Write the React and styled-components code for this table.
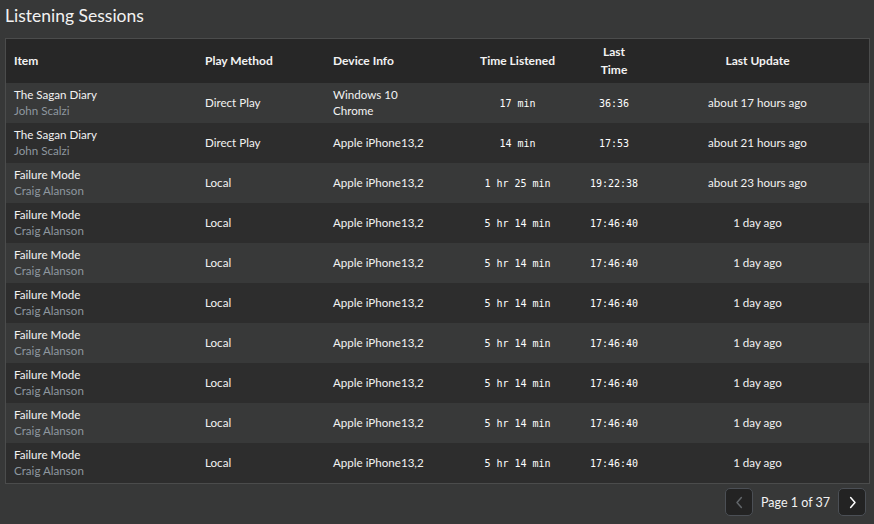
import React from "react";
import styled, { createGlobalStyle } from "styled-components";

const Global = createGlobalStyle`
  html, body { margin: 0; padding: 0; background: #373838; }
  body { font-family: "Source Sans Pro", Lato, "Open Sans", sans-serif; color: #f2f2f2; }
`;

const Page = styled.div`
  width: 874px;
  height: 524px;
  box-sizing: border-box;
  padding: 0 4px 0 5px;
  display: flex;
  flex-direction: column;
  overflow: hidden;
`;

const Title = styled.h1`
  margin: 0;
  font-size: 17.5px;
  font-weight: 400;
  line-height: 20px;
  padding: 6px 0 12px 0;
  color: #f2f2f2;
`;

const Table = styled.div`
  border: 1px solid #4b4c4c;
  display: flex;
  flex-direction: column;
`;

const cols = "191px 128px 140px 105px 88px 1fr";

const HeadRow = styled.div`
  display: grid;
  grid-template-columns: ${cols};
  height: 44px;
  background: #272727;
  align-items: center;
`;

const Row = styled.div`
  display: grid;
  grid-template-columns: ${cols};
  height: 40px;
  align-items: center;
  background: ${(p) => (p.$odd ? "#2d2d2d" : "#383939")};
`;

const Th = styled.div`
  font-size: 12px;
  font-weight: 700;
  line-height: 18px;
  padding: 0 8px;
  text-align: ${(p) => (p.$center ? "center" : "left")};
  ${(p) => (p.$last ? "padding-right: 20px;" : "")}
`;

const Narrow = styled.span`
  display: inline-block;
  max-width: 30px;
`;

const Td = styled.div`
  font-size: 11.6px;
  line-height: 16px;
  padding: 0 8px;
  text-align: ${(p) => (p.$center ? "center" : "left")};
  ${(p) => (p.$last ? "padding-right: 20px;" : "")}
`;

const ItemTitle = styled.div`
  color: #f2f2f2;
`;

const ItemAuthor = styled.div`
  color: #8e979f;
`;

const Mono = styled.div`
  font-family: "DejaVu Sans Mono", "Liberation Mono", monospace;
  font-size: 10px;
  font-weight: 400;
  text-align: center;
  padding: 0 8px;
  color: #ffffff;
`;

const Footer = styled.div`
  display: flex;
  justify-content: flex-end;
  align-items: center;
  gap: 8px;
  padding: 4px 4px 0 0;
`;

const PageBtn = styled.button`
  width: 28px;
  height: 28px;
  border-radius: 5px;
  border: 1px solid #4b4f55;
  background: #232323;
  display: flex;
  align-items: center;
  justify-content: center;
  padding: 0;
  color: ${(p) => (p.disabled ? "#62666a" : "#ffffff")};
`;

const PageText = styled.span`
  font-size: 12.5px;
  color: #f2f2f2;
`;

const Chevron = ({ dir }) => (
  <svg width="15" height="15" viewBox="0 0 24 24" fill="none" stroke="currentColor" strokeWidth="2.4" strokeLinecap="round" strokeLinejoin="round">
    {dir === "left" ? <path d="M15 4l-7 8 7 8" /> : <path d="M9 4l7 8-7 8" />}
  </svg>
);

const rows = [
  { t: "The Sagan Diary", a: "John Scalzi", m: "Direct Play", d: ["Windows 10", "Chrome"], l: "17 min", lt: "36:36", u: "about 17 hours ago" },
  { t: "The Sagan Diary", a: "John Scalzi", m: "Direct Play", d: ["Apple iPhone13,2"], l: "14 min", lt: "17:53", u: "about 21 hours ago" },
  { t: "Failure Mode", a: "Craig Alanson", m: "Local", d: ["Apple iPhone13,2"], l: "1 hr 25 min", lt: "19:22:38", u: "about 23 hours ago" },
  ...Array.from({ length: 7 }, () => ({ t: "Failure Mode", a: "Craig Alanson", m: "Local", d: ["Apple iPhone13,2"], l: "5 hr 14 min", lt: "17:46:40", u: "1 day ago" })),
];

export default function App() {
  return (
    <Page>
      <Global />
      <Title>Listening Sessions</Title>
      <Table>
        <HeadRow>
          <Th>Item</Th>
          <Th>Play Method</Th>
          <Th>Device Info</Th>
          <Th $center>Time Listened</Th>
          <Th $center><Narrow>Last Time</Narrow></Th>
          <Th $center $last>Last Update</Th>
        </HeadRow>
        {rows.map((r, i) => (
          <Row key={i} $odd={i % 2 === 1}>
            <Td>
              <ItemTitle>{r.t}</ItemTitle>
              <ItemAuthor>{r.a}</ItemAuthor>
            </Td>
            <Td>{r.m}</Td>
            <Td>{r.d.map((x, j) => <div key={j}>{x}</div>)}</Td>
            <Mono>{r.l}</Mono>
            <Mono>{r.lt}</Mono>
            <Td $center $last>{r.u}</Td>
          </Row>
        ))}
      </Table>
      <Footer>
        <PageBtn disabled><Chevron dir="left" /></PageBtn>
        <PageText>Page 1 of 37</PageText>
        <PageBtn><Chevron dir="right" /></PageBtn>
      </Footer>
    </Page>
  );
}
